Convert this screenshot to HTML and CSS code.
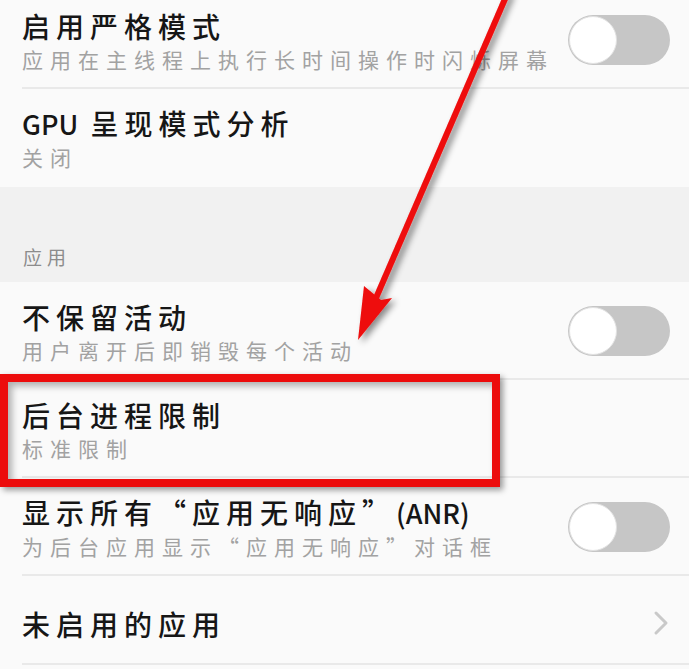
FILE: index.html
```html
<!DOCTYPE html>
<html lang="zh-CN">
<head>
    <meta charset="UTF-8">
    <meta name="viewport" content="width=device-width, initial-scale=1.0">
    <title>开发者选项</title>
    <link rel="stylesheet" href="styles.css">
</head>
<body>
    <div class="settings">
        <div class="item line">
            <div class="text">
                <div class="title">启用严格模式</div>
                <div class="sub">应用在主线程上执行长时间操作时闪烁屏幕</div>
            </div>
            <div class="switch"><span class="knob"></span></div>
        </div>
        <div class="item">
            <div class="text">
                <div class="title"><span class="latin">GPU</span> 呈现模式分析</div>
                <div class="sub">关闭</div>
            </div>
        </div>

        <div class="group-label">应用</div>

        <div class="item line">
            <div class="text">
                <div class="title">不保留活动</div>
                <div class="sub">用户离开后即销毁每个活动</div>
            </div>
            <div class="switch"><span class="knob"></span></div>
        </div>
        <div class="item line marked">
            <div class="text">
                <div class="title">后台进程限制</div>
                <div class="sub">标准限制</div>
            </div>
            <div class="mark-box"></div>
        </div>
        <div class="item line">
            <div class="text">
                <div class="title">显示所有“应用无响应”<span class="latin">(ANR)</span></div>
                <div class="sub">为后台应用显示“应用无响应”对话框</div>
            </div>
            <div class="switch"><span class="knob"></span></div>
        </div>
        <div class="item single line">
            <div class="text">
                <div class="title">未启用的应用</div>
            </div>
            <svg class="chevron" width="16" height="26" viewBox="0 0 16 26">
                <path d="M3 3 L13 13 L3 23" fill="none" stroke="#c9c9c9" stroke-width="3" stroke-linecap="round" stroke-linejoin="round"/>
            </svg>
        </div>

        <!-- pointer arrow drawn over the list -->
        <svg class="arrow" width="689" height="669" viewBox="0 0 689 669">
            <defs>
                <filter id="drop" x="-20%" y="-20%" width="140%" height="140%">
                    <feDropShadow dx="4" dy="3" stdDeviation="3" flood-color="#000" flood-opacity="0.45"/>
                </filter>
            </defs>
            <g filter="url(#drop)" fill="#ee0a0a">
                <line x1="508" y1="-8" x2="376" y2="298" stroke="#ee0a0a" stroke-width="6"/>
                <polygon points="358,340 392,298 381,300 364,286"/>
            </g>
        </svg>
    </div>
</body>
</html>
```

FILE: styles.css
```css
body {
    margin: 0;
    background: #fafafa;
    font-family: "Noto Sans CJK SC", "Noto Sans", sans-serif;
}
.settings {
    position: relative;
    width: 689px;
    height: 669px;
    overflow: hidden;
}
.item {
    display: flex;
    align-items: center;
    justify-content: space-between;
    height: 98px;
    padding: 0 19px 0 22px;
    box-sizing: border-box;
    background-color: #fafafa;
}
.item:first-child {
    margin-top: -9px;
}
.item.line {
    background-image: linear-gradient(#e9e9e9, #e9e9e9);
    background-repeat: no-repeat;
    background-position: 22px 100%;
    background-size: calc(100% - 22px) 2px;
}
.item.single {
    height: 89px;
    padding-top: 4px;
}
.text {
    padding-top: 2px;
}
.title {
    font-size: 28px;
    line-height: 34px;
    letter-spacing: 6px;
    color: #161616;
    font-weight: 500;
}
.title .latin {
    letter-spacing: 0;
    font-size: 27px;
}
.sub {
    font-size: 21px;
    line-height: 30px;
    letter-spacing: 7px;
    color: #a2a2a2;
    margin-top: 1px;
}
.group-label {
    height: 95px;
    box-sizing: border-box;
    padding: 0 0 12px 23px;
    display: flex;
    align-items: flex-end;
    background: #f1f1f1;
    font-size: 19px;
    letter-spacing: 5px;
    color: #8c8c8c;
}
.switch {
    width: 102px;
    height: 50px;
    border-radius: 25px;
    background: #c6c6c6;
    display: flex;
    align-items: center;
    flex-shrink: 0;
}
.knob {
    width: 46px;
    height: 46px;
    border-radius: 50%;
    background: #fff;
    border: 1px solid #e2e2e2;
    margin-left: 1px;
}
.chevron {
    margin-right: 1px;
}
.marked {
    position: relative;
}
.mark-box {
    position: absolute;
    left: 0;
    top: -6px;
    width: 500px;
    height: 113px;
    box-sizing: border-box;
    border: 8px solid #ec0c0c;
    box-shadow: 3px 3px 6px rgba(0, 0, 0, 0.4), inset 4px 4px 7px rgba(0, 0, 0, 0.3);
}
.arrow {
    position: absolute;
    left: 0;
    top: 0;
    pointer-events: none;
}
```
